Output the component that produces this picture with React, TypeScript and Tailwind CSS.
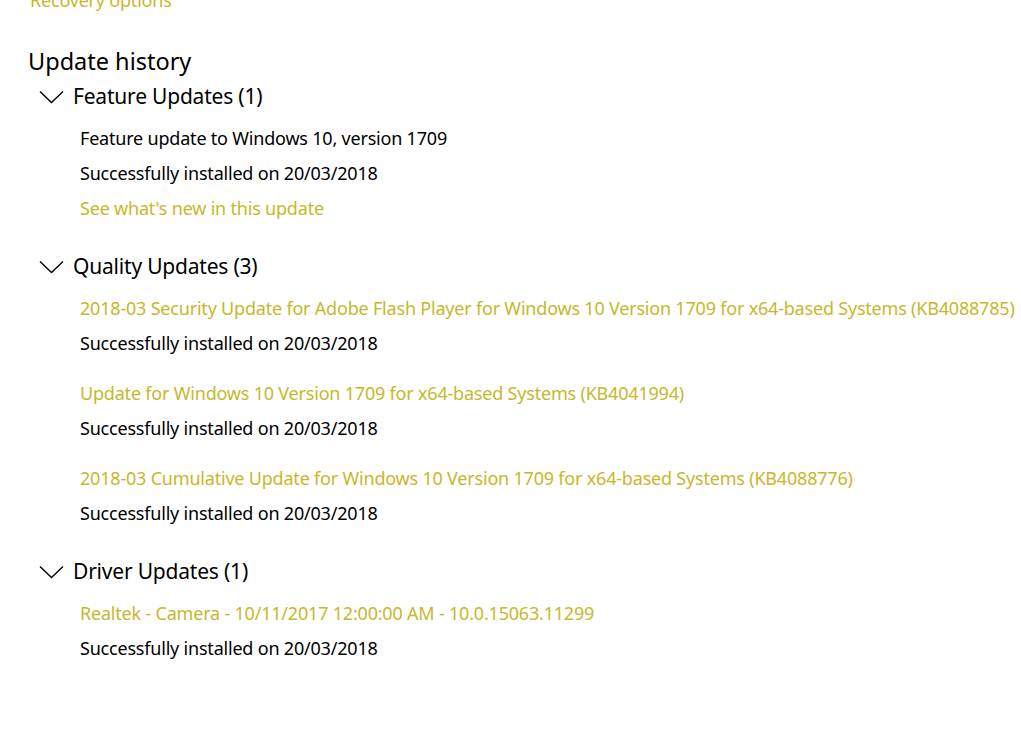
import React from "react";

const LINK = "text-[#c6b82b]";

function Chevron() {
  return (
    <svg width="25" height="14" viewBox="0 0 25 14" className="shrink-0">
      <polyline points="1,1.5 12.5,12.5 24,1.5" fill="none" stroke="#000" strokeWidth="1.4" />
    </svg>
  );
}

function Header({ title }: { title: string }) {
  return (
    <div className="flex h-[35px] items-center pl-[39px]">
      <Chevron />
      <span className="ml-[9px] text-[21px] tracking-[-0.2px] text-black">{title}</span>
    </div>
  );
}

function Row({ text, link }: { text: string; link?: boolean }) {
  return (
    <div className={`flex h-[35px] items-center pl-[80px] text-[18px] tracking-[-0.2px] whitespace-nowrap ${link ? LINK : "text-black"}`}>
      {text}
    </div>
  );
}

const OK = "Successfully installed on 20/03/2018";

export default function App() {
  return (
    <div className="h-[746px] w-[1021px] overflow-hidden bg-white" style={{ fontFamily: '"Noto Sans", "Open Sans", sans-serif' }}>
      <div className="mt-[-17px] flex flex-col">
        <div className={`flex h-[35px] items-center pl-[30px] text-[18px] tracking-[-0.2px] ${LINK}`}>Recovery options</div>
        <div className="mt-[26px] flex h-[35px] items-center pl-[28px] text-[23.5px] text-black">Update history</div>
        <Header title="Feature Updates (1)" />
        <div className="mt-[7px]">
          <Row text="Feature update to Windows 10, version 1709" />
          <Row text={OK} />
          <Row text="See what's new in this update" link />
        </div>
        <div className="mt-[23px]">
          <Header title="Quality Updates (3)" />
        </div>
        <div className="mt-[7px]">
          <Row text="2018-03 Security Update for Adobe Flash Player for Windows 10 Version 1709 for x64-based Systems (KB4088785)" link />
          <Row text={OK} />
        </div>
        <div className="mt-[15px]">
          <Row text="Update for Windows 10 Version 1709 for x64-based Systems (KB4041994)" link />
          <Row text={OK} />
        </div>
        <div className="mt-[15px]">
          <Row text="2018-03 Cumulative Update for Windows 10 Version 1709 for x64-based Systems (KB4088776)" link />
          <Row text={OK} />
        </div>
        <div className="mt-[23px]">
          <Header title="Driver Updates (1)" />
        </div>
        <div className="mt-[7px]">
          <Row text="Realtek - Camera - 10/11/2017 12:00:00 AM - 10.0.15063.11299" link />
          <Row text={OK} />
        </div>
      </div>
    </div>
  );
}
